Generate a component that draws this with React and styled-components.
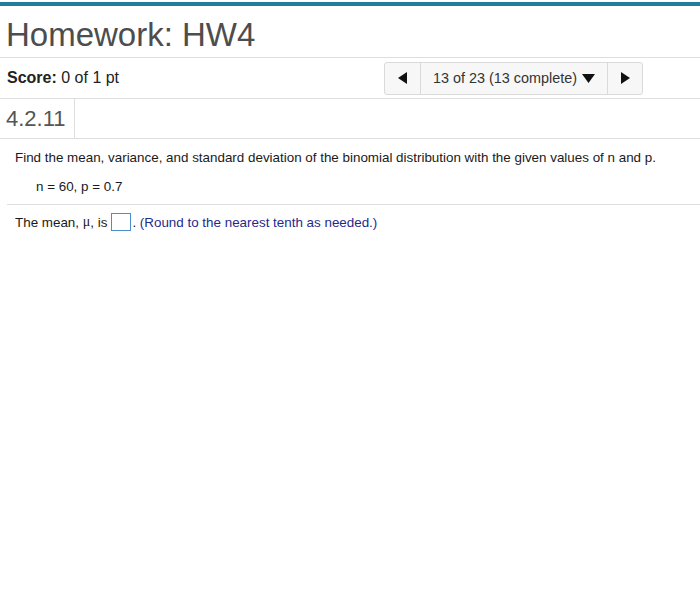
import React from 'react';
import styled, { createGlobalStyle } from 'styled-components';

const GlobalStyle = createGlobalStyle`
  body {
    margin: 0;
    background: #fff;
    font-family: "Liberation Sans", Arial, sans-serif;
  }
`;

const Page = styled.div`
  width: 700px;
  padding-top: 2px;
`;

const TopBar = styled.div`
  height: 4px;
  background: #1f7d9e;
`;

const TitleRow = styled.div`
  height: 52px;
  display: flex;
  align-items: center;
  padding: 6px 0 0 6px;
  box-sizing: border-box;
  font-size: 33px;
  color: #4d4d4d;
  border-bottom: 1px solid #dedede;
`;

const ScoreRow = styled.div`
  height: 40px;
  display: flex;
  align-items: center;
  justify-content: space-between;
  padding: 0 57px 0 7px;
  border-bottom: 1px solid #dedede;
  font-size: 16px;
  color: #222;
`;

const Score = styled.div`
  & b {
    font-weight: bold;
  }
`;

const NavBox = styled.div`
  display: flex;
  height: 31px;
  width: 257px;
  border: 1px solid #dadada;
  border-radius: 3px;
  background: #f7f7f7;
`;

const NavCell = styled.div`
  display: flex;
  align-items: center;
  justify-content: center;
  width: ${props => props.w}px;
  flex: ${props => (props.grow ? 1 : 'none')};
  border-left: ${props => (props.divider ? '1px solid #dadada' : 'none')};
  font-size: 14.4px;
  color: #333;
  gap: 5px;
`;

const Arrow = styled.svg`
  display: block;
  fill: #111;
`;

const QRow = styled.div`
  height: 39px;
  display: flex;
  border-bottom: 1px solid #dedede;
`;

const QNumber = styled.div`
  display: flex;
  align-items: center;
  padding: 0 8px 0 6px;
  font-size: 22px;
  color: #555;
  border-right: 1px solid #dedede;
`;

const Body = styled.div`
  padding: 9px 0 0 15px;
  font-size: 13.4px;
  color: #1a1a1a;
`;

const Prompt = styled.p`
  margin: 0;
  height: 20px;
  line-height: 20px;
`;

const Given = styled.p`
  margin: 9px 0 0 21px;
  height: 20px;
  line-height: 20px;
`;

const Divider = styled.div`
  height: 1px;
  background: #dedede;
  margin: 7px 0 0 -8px;
`;

const Answer = styled.div`
  display: flex;
  align-items: center;
  height: 20px;
  margin-top: 7px;
  white-space: pre;
`;

const Mu = styled.span`
  font-family: "Liberation Serif", "DejaVu Serif", serif;
  font-size: 14px;
`;

const InputBox = styled.span`
  display: inline-block;
  width: 18px;
  height: 16px;
  border: 1px solid #4a90cc;
  margin: 0 1px 0 4px;
  background: #fff;
`;

const Hint = styled.span`
  color: #1f2a8a;
`;

const App = () => {
  return (
    <>
      <GlobalStyle />
      <Page>
        <TopBar />
        <TitleRow>Homework: HW4</TitleRow>
        <ScoreRow>
          <Score><b>Score:</b> 0 of 1 pt</Score>
          <NavBox>
            <NavCell w={35}>
              <Arrow width="9" height="12" viewBox="0 0 9 12"><path d="M9 0 L0 6 L9 12 Z" /></Arrow>
            </NavCell>
            <NavCell grow divider>
              13 of 23 (13 complete)
              <Arrow width="13" height="9" viewBox="0 0 13 9"><path d="M0 0 L13 0 L6.5 9 Z" /></Arrow>
            </NavCell>
            <NavCell w={34} divider>
              <Arrow width="9" height="12" viewBox="0 0 9 12"><path d="M0 0 L9 6 L0 12 Z" /></Arrow>
            </NavCell>
          </NavBox>
        </ScoreRow>
        <QRow>
          <QNumber>4.2.11</QNumber>
        </QRow>
        <Body>
          <Prompt>Find the mean, variance, and standard deviation of the binomial distribution with the given values of n and p.</Prompt>
          <Given>n = 60, p = 0.7</Given>
          <Divider />
          <Answer>
            <span>The mean, </span>
            <Mu>μ</Mu>
            <span>, is</span>
            <InputBox />
            <span>. </span>
            <Hint>(Round to the nearest tenth as needed.)</Hint>
          </Answer>
        </Body>
      </Page>
    </>
  );
};

export default App;
